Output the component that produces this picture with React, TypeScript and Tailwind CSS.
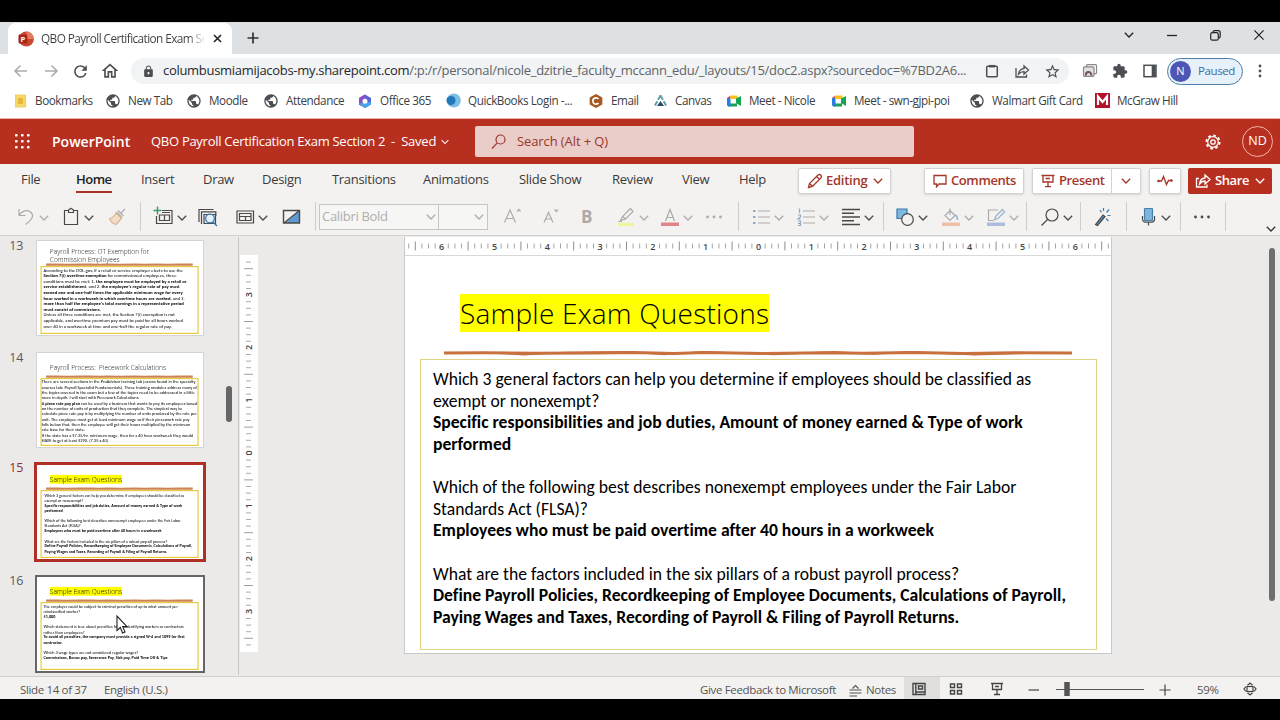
import React from "react";
import { clsx } from "clsx";
import { MdExtension, MdLock, MdOutlineHome, MdPublic, MdRefresh, MdStarBorder } from "react-icons/md";

type IconProps = { children: React.ReactNode; className?: string; size?: number };

function Icon({ children, className, size = 20 }: IconProps) {
  return (
    <svg width={size} height={size} viewBox={`0 0 ${size} ${size}`} fill="none" stroke="currentColor" strokeWidth="1.2" className={clsx("shrink-0", className)}>
      {children}
    </svg>
  );
}

function Chevron({ className }: { className?: string }) {
  return (
    <svg width="10" height="6" viewBox="0 0 10 6" fill="none" stroke="currentColor" strokeWidth="1.3" className={clsx("shrink-0", className)}>
      <path d="M0.8 0.8 5 5 9.2 0.8" />
    </svg>
  );
}

/* ---------- browser chrome ---------- */

function TabStrip() {
  return (
    <div className="flex h-8 bg-[#dee1e4] pl-2 pt-px">
      <div className="flex h-[31px] w-[224px] items-center rounded-t-lg bg-white pl-[10px]">
        <svg width="16" height="16" viewBox="0 0 16 16" className="shrink-0">
          <circle cx="8.3" cy="8" r="7.6" fill="#c9462f" />
          <path d="M8.3 0.4a7.6 7.6 0 0 1 7.6 7.6H8.3z" fill="#e57a60" />
          <rect x="0.5" y="3.6" width="8.8" height="8.8" rx="1" fill="#a52818" />
          <text x="2.6" y="10.8" fontSize="7.6" fontWeight="700" fill="#fff" fontFamily="Open Sans, sans-serif">P</text>
        </svg>
        <span className="ml-[7px] w-[164px] whitespace-nowrap bg-linear-to-r from-[#3c4043] from-90% to-transparent bg-clip-text text-[11.8px] tracking-[-0.58px] text-transparent">
          QBO Payroll Certification Exam Se
        </span>
        <svg width="9" height="9" viewBox="0 0 9 9" className="ml-[8px] shrink-0" stroke="#222" strokeWidth="1.6">
          <path d="M1 1 8 8M8 1 1 8" />
        </svg>
      </div>
      <svg width="12" height="12" viewBox="0 0 12 12" className="ml-[15px] mt-[9px]" stroke="#333" strokeWidth="1.7">
        <path d="M6 0.5V11.5M0.5 6H11.5" />
      </svg>
      <div className="ml-auto flex h-6 items-center text-[#222]">
        <Chevron className="mr-[33px]" />
        <svg width="10" height="10" viewBox="0 0 10 10" className="mr-[33px]" stroke="currentColor" strokeWidth="1.3"><path d="M0 5.5H10" /></svg>
        <svg width="11" height="11" viewBox="0 0 11 11" className="mr-[33px]" fill="none" stroke="currentColor" strokeWidth="1.2">
          <rect x="0.7" y="2.6" width="7.6" height="7.6" rx="1.8" />
          <path d="M3 2.2C3 1 3.6 0.7 4.6 0.7H8.2Q10.2 0.7 10.2 2.7V6.4C10.2 7.6 9.8 8 8.8 8.2" />
        </svg>
        <svg width="10" height="10" viewBox="0 0 10 10" className="mr-4" stroke="currentColor" strokeWidth="1.2"><path d="M0.4 0.4 9.6 9.6M9.6 0.4 0.4 9.6" /></svg>
      </div>
    </div>
  );
}

function AddressBar() {
  return (
    <div className="flex h-[34px] items-center bg-white pl-[13px] text-[#4b4f53]">
      <Icon size={16} className="text-[#a9acaf]"><path strokeWidth="1.6" d="M14 8H2.5M7.5 2.5 2 8l5.5 5.5" /></Icon>
      <Icon size={16} className="ml-[14px] text-[#a9acaf]"><path strokeWidth="1.6" d="M2 8h11.5M8.5 2.5 14 8l-5.5 5.5" /></Icon>
      <MdRefresh size={19} className="ml-[12px]" />
      <MdOutlineHome size={20} className="ml-[10px]" />
      <div className="ml-[11px] flex h-[26px] w-[938px] items-center rounded-full bg-[#f1f3f4] pl-[11px]">
        <MdLock size={13} />
        <span className="ml-2 w-[805px] whitespace-nowrap text-[13px] tracking-[-0.3px] text-[#5f6368]">
          <span className="text-[#26282b]">columbusmiamijacobs-my.sharepoint.com</span>
          /:p:/r/personal/nicole_dzitrie_faculty_mccann_edu/_layouts/15/doc2.aspx?sourcedoc=%7BD2A6...
        </span>
        <Icon size={14} className="ml-[17px]"><rect x="1.7" y="2.2" width="10.6" height="10.6" rx="1" strokeWidth="1.5" /><path strokeWidth="2.5" d="M4 2.2h6" /></Icon>
        <Icon size={16} className="ml-[15px]"><path strokeWidth="1.3" d="M2 5V14H12.5V11.5M4.5 11C5 7.5 7 5.8 10 5.6V3L14.5 7 10 11V8.6C7.5 8.6 6 9.2 4.5 11Z" /></Icon>
        <MdStarBorder size={17} className="ml-[14px]" />
      </div>
      <Icon size={16} className="ml-[13px] text-[#888]">
        <rect x="4.5" y="1.7" width="10" height="9" rx="1" />
        <rect x="1.5" y="3.8" width="10.5" height="9.5" rx="1" fill="#e4e0df" />
        <path d="M3.8 12.5c0-4.6 5.6-4.6 5.6 0" stroke="#6d5552" strokeWidth="2" />
      </Icon>
      <MdExtension size={16} className="ml-[14px]" />
      <Icon size={14} className="ml-[15px]"><rect x="1" y="1.3" width="12" height="11.4" strokeWidth="1.5" /><path d="M10.7 1v12" strokeWidth="4" /></Icon>
      <div className="ml-[10px] flex h-[27px] w-[76px] items-center rounded-full border border-[#4c7fa8] bg-[#e6f1fb] pl-[2px]">
        <span className="flex size-[21px] items-center justify-center rounded-full bg-[#4d55b5] text-[11px] text-white">N</span>
        <span className="ml-[7px] text-[11.5px] tracking-[-0.4px] text-[#3f6b9e]">Paused</span>
      </div>
      <svg width="4" height="14" viewBox="0 0 4 14" className="ml-[15px]" fill="#4b4f53">
        <circle cx="2" cy="2" r="1.4" /><circle cx="2" cy="7" r="1.4" /><circle cx="2" cy="12" r="1.4" />
      </svg>
    </div>
  );
}

const meetIcon = (
  <Icon size={14} className="my-px">
    <path stroke="none" fill="#2a7de1" d="M0 4h3.5v6H0z" />
    <path stroke="none" fill="#e8452f" d="M0 4 3.5 1.5V4z" />
    <path stroke="none" fill="#f8c21c" d="M3.5 1.5H10.5V5H3.5z" />
    <path stroke="none" fill="#15a552" d="M3.5 9.5H10V12.5H1.5L0 11zM9 4.5 14 2v10L9 9z" />
    <path stroke="none" fill="#2a7de1" d="M0 9.5h3.5v3H1.5L0 11z" />
  </Icon>
);

const globe = <MdPublic size={16} className="-ml-px shrink-0 text-[#4b4f53]" />;

const bookmarks = [
  { label: "Bookmarks", cell: "w-[91px]", icon: <Icon size={14}><path d="M0.5 1h10v12h-10z" fill="#f5d867" stroke="#efd064" /><path d="M3 4h5v6H3z" fill="#e4b83c" stroke="none" /></Icon> },
  { label: "New Tab", cell: "w-[81px]", icon: globe },
  { label: "Moodle", cell: "w-[77px]", icon: globe },
  { label: "Attendance", cell: "w-[94px]", icon: globe },
  { label: "Office 365", cell: "w-[88px]", icon: <Icon size={14}><path d="M7 0.5 13 4V10.5L7 14 1 10.5V4Z" fill="#5566d6" stroke="none" /><path d="M7 0.5 1 4V10.5L4 12 7 5Z" fill="#8b50c8" stroke="none" /><path d="M1 9.5 7 14 13 10.5V8Z" fill="#45a5e8" stroke="none" /><circle cx="7" cy="7.2" r="2.5" fill="#fff" stroke="none" /></Icon> },
  { label: "QuickBooks Login -...", cell: "w-[143px]", icon: <Icon size={15}><circle cx="7.8" cy="7.5" r="7" fill="#7cbde6" stroke="none" /><circle cx="5" cy="7.5" r="4.5" fill="#2378b8" stroke="none" /></Icon> },
  { label: "Email", cell: "w-[64px]", icon: <Icon size={14}><path d="M7 0 13.3 3.5V10.5L7 14 0.7 10.5V3.5Z" fill="#a8591f" stroke="none" /><path d="M9.5 5A3.2 3.2 0 1 0 9.5 9" stroke="#fff" strokeWidth="1.7" /></Icon> },
  { label: "Canvas", cell: "w-[74px]", icon: <Icon size={15}><path d="M7.5 2.5 13.6 13.5M7.5 2.5 1.4 13.5" stroke="#5da0a6" strokeWidth="2" strokeDasharray="5 1.5" /><path d="M4 13 7.5 8 11 13Z" fill="#2d4a63" stroke="none" /></Icon> },
  { label: "Meet - Nicole", cell: "w-[105px]", icon: meetIcon },
  { label: "Meet - swn-gjpi-poi", cell: "w-[138px]", icon: meetIcon },
  { label: "Walmart Gift Card", cell: "w-[125px]", icon: globe },
  { label: "McGraw Hill", cell: "w-[90px]", icon: <Icon size={15}><rect width="15" height="15" fill="#b3122a" stroke="none" /><path d="M3 12V3.5L7.5 9 12 3.5V12" stroke="#fff" strokeWidth="2.2" /></Icon> },
];

function BookmarksBar() {
  return (
    <div className="flex h-[30px] items-center bg-white pb-1 pl-[15px] text-[11.7px] text-[#3c4043]">
      {bookmarks.map((b, i) => (
        <div key={b.label} className={clsx("flex shrink-0 items-center", b.cell)}>
          <span className={clsx("flex shrink-0", i === 0 ? "w-5" : "w-[22px]")}>{b.icon}</span>
          <span className="whitespace-nowrap tracking-[-0.42px]">{b.label}</span>
        </div>
      ))}
    </div>
  );
}

/* ---------- PowerPoint header and ribbon ---------- */

function AppHeader() {
  return (
    <div className="flex h-[45px] items-center bg-[#b7301f] pl-[15px] text-white">
      <svg width="15" height="15" viewBox="0 0 15 15" fill="#fff">
        {[0, 6, 12].map((y) => [0, 6, 12].map((x) => <rect key={`${x}-${y}`} x={x} y={y} width="2.6" height="2.6" rx="0.8" />))}
      </svg>
      <span className="ml-[22px] w-[99px] text-[14px] font-semibold">PowerPoint</span>
      <span className="w-[240px] whitespace-nowrap text-[13px] tracking-[-0.28px]">QBO Payroll Certification Exam Section 2</span>
      <span className="w-[50px] whitespace-nowrap text-[13px] tracking-[-0.24px]">-&nbsp; Saved</span>
      <Chevron className="w-2" />
      <div className="ml-[26px] flex h-[31px] w-[439px] items-center rounded-[2px] bg-[#eaccc8] pl-4 text-[#98382c]">
        <Icon size={16}><circle cx="9.5" cy="5.5" r="4.5" /><path d="M6.3 8.9 1 14.5" /></Icon>
        <span className="ml-[10px] text-[13px] tracking-[-0.1px]">Search (Alt + Q)</span>
      </div>
      <Icon size={16} className="ml-[291px]">
        <circle cx="8" cy="8" r="6.6" strokeWidth="1.9" strokeDasharray="2.7 2.48" />
        <circle cx="8" cy="8" r="5.3" strokeWidth="1.2" />
        <circle cx="8" cy="8" r="2.2" strokeWidth="1.3" />
      </Icon>
      <span className="ml-[21px] flex size-[31px] items-center justify-center rounded-full border-[1.5px] border-[#f6b3a8] text-[12.5px]">ND</span>
    </div>
  );
}

const tabs = [
  { label: "File", cell: "w-[55px]" },
  { label: "Home", cell: "w-[65px]", active: true },
  { label: "Insert", cell: "w-[62px]" },
  { label: "Draw", cell: "w-[59px]" },
  { label: "Design", cell: "w-[70px]" },
  { label: "Transitions", cell: "w-[91px]" },
  { label: "Animations", cell: "w-[96px]" },
  { label: "Slide Show", cell: "w-[93px]" },
  { label: "Review", cell: "w-[70px]" },
  { label: "View", cell: "w-[57px]" },
  { label: "Help", cell: "w-[59px]" },
];

const buttonBase = "flex h-[26px] items-center rounded-[2px] border border-[#d4d2d0] bg-white text-[#a4372a] shadow-sm";

function RibbonTabs() {
  return (
    <div className="flex h-[36px] pl-[21px] text-[13px] text-[#3b3a39]">
      {tabs.map((t) => (
        <div key={t.label} className={clsx("flex shrink-0 pt-[6px]", t.cell)}>
          <span className={clsx("h-[23px] whitespace-nowrap", t.active ? "border-b-2 border-[#a83224] font-semibold tracking-[-0.5px] text-[#222]" : "tracking-[-0.3px]")}>{t.label}</span>
        </div>
      ))}
      <div className="flex pt-1 font-semibold tracking-[-0.25px]">
        <div className={clsx(buttonBase, "w-[93px] pl-2")}>
          <Icon size={16}><path strokeWidth="1.3" d="M1.5 14.5 2.5 10.5 11 2Q12.5 0.8 13.8 2.2 15 3.5 13.8 5L5.5 13.5ZM9.5 3.5 12.3 6.3M2.5 10.5 5.5 13.5" /></Icon>
          <span className="ml-[3px] w-[46px]">Editing</span>
          <Chevron className="ml-px" />
        </div>
        <div className={clsx(buttonBase, "ml-[33px] w-[100px] pl-2")}>
          <Icon size={14}><path strokeWidth="1.3" d="M1 1.5H13V10H6L3.5 12.8V10H1Z" /></Icon>
          <span className="ml-[4px] tracking-[-0.4px]">Comments</span>
        </div>
        <div className={clsx(buttonBase, "ml-2 w-[109px] pl-2")}>
          <Icon size={14}><path strokeWidth="1.3" d="M0.5 1.5H13.5M2 1.5V8H12V1.5M7 8V12.5M4 12.7H10M4.5 4.5H9" /></Icon>
          <span className="ml-[4px] w-[52px] tracking-[-0.4px]">Present</span>
          <span className="flex h-full w-[29px] items-center justify-center border-l border-[#d4d2d0]"><Chevron /></span>
        </div>
        <div className={clsx(buttonBase, "ml-2 w-[32px] justify-center")}>
          <Icon size={16}><path strokeWidth="1.4" d="M1.5 8H4.5L6.5 3.5 9.5 11.5 11.5 7.5H14.5" /><circle cx="1.5" cy="8" r="0.7" fill="currentColor" /><circle cx="14.5" cy="7.5" r="0.7" fill="currentColor" /></Icon>
        </div>
        <div className="ml-[7px] flex h-[26px] w-[84px] items-center rounded-[2px] bg-[#b7301f] pl-[7px] text-white">
          <Icon size={16}><path strokeWidth="1.3" d="M4 5.5H1.5V14H12V11.5M4.5 11C5 7 7 5.2 10 5V2L15 6.5 10 11V8C7.5 8 6 9 4.5 11Z" /></Icon>
          <span className="ml-[4px] w-[36px] tracking-[-0.4px]">Share</span>
          <Chevron className="ml-1" />
        </div>
      </div>
    </div>
  );
}

function Tool({ cell, dim, chevron, children }: { cell: string; dim?: boolean; chevron?: boolean; children: React.ReactNode }) {
  return (
    <div className={clsx("flex shrink-0 items-center", cell, dim ? "text-[#adabaa]" : "text-[#4a4948]")}>
      {children}
      {chevron && <Chevron className="ml-[3px] mt-[2px]" />}
    </div>
  );
}

function Rule({ gap }: { gap: string }) {
  return <div className={clsx("h-[29px] w-px shrink-0 bg-[#cfcdcb]", gap)} />;
}

function Toolbar() {
  return (
    <div className="flex h-[36px] items-center border-b border-[#d2d0ce] pb-[2px] pl-4">
      <Tool cell="w-[45px]" chevron dim>
        <Icon><path d="M3 2V8.5H9.500M3.300 8.200C6 3.5 11 2.5 14.5 5c3.5 3 3 6.5-5 12.500" /></Icon>
      </Tool>
      <Tool cell="w-[46px]" chevron>
        <Icon><path d="M7.500 3.5H3.500V17.500H16.5V3.5H12.500M7.500 5.500V3L9 2Q10 0.500 11 2L12.500 3V5.500Z" /></Icon>
      </Tool>
      <Tool cell="w-[33px]" dim>
        <Icon><path d="M18 2 13.500 6.500M9.500 5 15 10.500M11 3.500 16.500 9" /><path d="M9 6 14.500 11.500 9 17.500Q4.500 16.500 2.500 11.500Q6.500 11 9 6Z" fill="#f3ddc6" stroke="#d8b794" /></Icon>
      </Tool>
      <Rule gap="mr-[12px]" />
      <Tool cell="w-[45px]" chevron>
        <Icon size={22} className="-mr-px"><path d="M9 4.5H19V17.500H3.500V10" /><path d="M6.500 9H16.500V14.500H6.500ZM11.500 9V14.500M9 6.500H17" /><path d="M4.500 0.500V8.500M0.500 4.500H8.500" stroke="#3c9a62" strokeWidth="1.4" /></Icon>
      </Tool>
      <Tool cell="w-[37px]">
        <Icon><path d="M1 15V2.500H15.500M3.500 17V4.800H17.800V9" /><path d="M6 7.500H17.500V16.500H6Z" fill="#d5e6f4" /><circle cx="12" cy="11.5" r="4.3" stroke="#3a78ad" fill="#e6f2fb" /><path d="M15 15 19 19" stroke="#3a78ad" strokeWidth="1.5" /></Icon>
      </Tool>
      <Tool cell="w-[47px]" chevron>
        <Icon><path d="M2 4H18.500V16H2ZM4.500 6.500H16V13.500H4.500ZM4.500 9.500H16M10.500 9.500V13.500" /></Icon>
      </Tool>
      <Tool cell="w-[33px]">
        <Icon><path d="M17.500 3.500V16H3.500Z" fill="#5f9bd2" stroke="none" /><path d="M1.500 3.500H17.500V16H1.500ZM2 16 17.500 3.500" strokeWidth="1.4" /></Icon>
      </Tool>
      <Rule gap="mr-[3px]" />
      <div className="flex h-[26px] w-[120px] items-center border border-[#c8c6c4] bg-[#f6f6f5] pl-[2px] pr-[2px] text-[13px] tracking-[-0.3px] text-[#b0aeac]">
        Calibri Bold
        <Chevron className="ml-auto" />
      </div>
      <div className="mr-[15px] flex h-[26px] w-[49px] items-center justify-end border border-l-0 border-[#c8c6c4] bg-[#f6f6f5] pr-[3px] text-[#b0aeac]"><Chevron /></div>
      <Tool cell="w-[38px]" dim><Icon><path d="M1.500 15.500 7 3 12.500 15.500M3.500 11.500H10.500M14 4.500 15.800 2.500 17.600 4.500" /></Icon></Tool>
      <Tool cell="w-[36px]" dim><Icon><path d="M3 15.500 7.500 5.500 12 15.500M4.800 12H10.200M13.500 2.500 15.300 4.500 17 2.500" /></Icon></Tool>
      <Tool cell="w-[39px]" dim><span className="ml-1 text-[17px] font-bold">B</span></Tool>
      <Tool cell="w-[44px]" chevron dim>
        <Icon><path d="M2 16H18V19H2Z" fill="#f3f49a" stroke="none" /><path d="M4.500 13.500 6.500 9.500 14.500 1.500 17 4.500 9.500 12ZM6.500 9.500 9.500 12M2.500 14.500H6" /></Icon>
      </Tool>
      <Tool cell="w-[44px]" chevron dim>
        <Icon><path d="M1 15.500H19V19H1Z" fill="#e0848b" stroke="none" /><path d="M5.500 14 10 2.500 14.500 14M7 10.500H13" /></Icon>
      </Tool>
      <Tool cell="w-[34px]" dim><Icon><g fill="currentColor" stroke="none"><circle cx="3.5" cy="10" r="1.4" /><circle cx="10" cy="10" r="1.4" /><circle cx="16.5" cy="10" r="1.4" /></g></Icon></Tool>
      <Rule gap="mr-[12px]" />
      <Tool cell="w-[45px]" chevron dim>
        <Icon><path d="M7 4H19M7 10H19M7 16H19" /><path d="M2 4H4.500M2 10H4.500M2 16H4.500" stroke="#90acc5" strokeWidth="2.2" /></Icon>
      </Tool>
      <Tool cell="w-[45px]" chevron dim>
        <Icon><path d="M7 4H19M7 10H19M7 16H19" /><path d="M3.500 1.500V6M2 8H4.500V10L2 12H4.500M2 14H4.500V18.500H2M2 16.300H4.500" stroke="#90acc5" /></Icon>
      </Tool>
      <Tool cell="w-[42px]" chevron>
        <Icon><path d="M1 2.500H19M1 6.200H13M1 10H19M1 13.800H13M1 17.500H19" strokeWidth="1.4" /></Icon>
      </Tool>
      <Rule gap="mr-[11px]" />
      <Tool cell="w-[46px]" chevron>
        <Icon><path d="M2 2H12V11.500H2Z" fill="#7db8de" stroke="#3a78a8" /><circle cx="12.5" cy="12.500" r="5.8" fill="#f3f2f1" /></Icon>
      </Tool>
      <Tool cell="w-[45px]" chevron dim>
        <Icon><path d="M1 15.500H19V19H1Z" fill="#eebfa9" stroke="none" /><path d="M9 1.500V8M9 3.500 14 8.500 9 13.500 4 8.500Z" /><path d="M13.500 8.500Q16 7.500 16.500 13" stroke="#93b1cc" strokeWidth="1.6" /></Icon>
      </Tool>
      <Tool cell="w-[40px]" chevron dim>
        <Icon><path d="M1 15.500H19V19H1Z" fill="#acbcdc" stroke="none" /><path d="M12 3H2.500V13.500H8" /><path d="M8.500 12.500 10 9 16.500 2.500 18.500 5 12 11.500Z" stroke="#93b1cc" /></Icon>
      </Tool>
      <Rule gap="mr-[13px]" />
      <Tool cell="w-[40px]" chevron>
        <Icon><circle cx="12" cy="8" r="6" /><path d="M7.800 12.300 1.500 18.500" /></Icon>
      </Tool>
      <Rule gap="mr-[12px]" />
      <Tool cell="w-[33px]">
        <Icon><path d="M2.500 17.500 10 8 12 9.500 4.500 18.500Z" fill="#5790bd" /><path d="M10.500 1V4M13.500 5.500 16 2.500M14.500 8.500H17.500M13 11.500 15.500 14M7 3 8.500 5.500" stroke="#3c80ae" /></Icon>
      </Tool>
      <Rule gap="mr-[11px]" />
      <Tool cell="w-[42px]" chevron>
        <Icon><rect x="6.5" y="1.5" width="8" height="12" rx="0.8" fill="#7fb4df" stroke="#4581ad" /><path d="M4.500 9V12.500Q5 15 7.500 15.200H13.500Q16.500 15 16.500 12.500V9M10.500 15.500V18.500" /></Icon>
      </Tool>
      <Rule gap="mr-[11px]" />
      <Tool cell="w-[33px]"><Icon><g fill="currentColor" stroke="none"><circle cx="3.5" cy="10" r="1.4" /><circle cx="10" cy="10" r="1.4" /><circle cx="16.5" cy="10" r="1.4" /></g></Icon></Tool>
      <Rule gap="mr-[40px]" />
      <Chevron className="mt-6 text-[#333]" />
    </div>
  );
}

/* ---------- slides ---------- */

type Line = React.ReactNode;

type SlideData = {
  title: Line[];
  highlight?: boolean;
  body: Line[];
  text: string;
};

const examQuestions: SlideData = {
  title: ["Sample Exam Questions"],
  highlight: true,
  text: "pl-3 pt-[9px] text-[17.6px] leading-[21.64px]",
  body: [
    "Which 3 general factors can help you determine if employees should be classified as",
    "exempt or nonexempt?",
    <b>Specific responsibilities and job duties, Amount of money earned &amp; Type of work</b>,
    <b>performed</b>,
    "",
    "Which of the following best describes nonexempt employees under the Fair Labor",
    "Standards Act (FLSA)?",
    <b>Employees who must be paid overtime after 40 hours in a workweek</b>,
    "",
    "What are the factors included in the six pillars of a robust payroll process?",
    <b>Define Payroll Policies, Recordkeeping of Employee Documents, Calculations of Payroll,</b>,
    <b>Paying Wages and Taxes, Recording of Payroll &amp; Filing of Payroll Returns.</b>,
  ],
};

const overtime: SlideData = {
  title: ["Payroll Process: OT Exemption for", "Commission Employees"],
  text: "pl-2 text-[20.3px] leading-[24px]",
  body: [
    "According to the DOL.gov, if a retail or service employer elects to use the",
    <><b>Section 7(i) overtime exemption</b> for commissioned employees, three</>,
    <>conditions must be met: 1. <b>the employee must be employed by a retail or</b></>,
    <><b>service establishment</b>, and 2. <b>the employee's regular rate of pay must</b></>,
    <b>exceed one and one-half times the applicable minimum wage for every</b>,
    <><b>hour worked in a workweek in which overtime hours are worked</b>, and 3.</>,
    <b>more than half the employee's total earnings in a representative period</b>,
    <b>must consist of commissions.</b>,
    "Unless all three conditions are met, the Section 7(i) exemption is not",
    "applicable, and overtime premium pay must be paid for all hours worked",
    "over 40 in a workweek at time and one-half the regular rate of pay.",
  ],
};

const piecework: SlideData = {
  title: ["Payroll Process:  Piecework Calculations"],
  text: "pl-0 text-[19px] leading-[22.9px]",
  body: [
    "There are several sections in the ProAdvisor training tab (exams found in the specialty",
    "courses tab: Payroll Specialist Fundamentals). These training modules address many of",
    "the topics covered in the exam but a few of the topics need to be addressed in a little",
    "more in depth. I will start with Piecework Calculations.",
    <>A <b>piece rate pay plan</b> can be used by a business that wants to pay its employees based</>,
    "on the number of units of production that they complete. The simplest way to",
    "calculate piece rate pay is by multiplying the number of units produced by the rate per",
    "unit. The employee must get at least minimum wage so if their piecework rate pay",
    "falls below that, then the employee will get their hours multiplied by the minimum",
    "rate base for their state.",
    "If the state has a $7.25/hr. minimum wage, then for a 40 hour workweek they would",
    "HAVE to get at least $290. (7.25 x 40)",
  ],
};

const penalties: SlideData = {
  title: ["Sample Exam Questions"],
  highlight: true,
  text: "pl-2 pt-1 text-[18.2px] leading-[21.9px]",
  body: [
    "The employer could be subject to criminal penalties of up to what amount per",
    "misclassified worker?",
    <b>$1,000</b>,
    "",
    "Which statement is true about penalties for misidentifying workers as contractors",
    "rather than employees?",
    <b>To avoid all penalties, the company must provide a signed W-4 and 1099 for that</b>,
    <b>contractor.</b>,
    "",
    "Which 3 wage types are not considered regular wages?",
    <b>Commissions, Bonus pay, Severance Pay, Sick pay, Paid Time Off &amp; Tips</b>,
  ],
};

function Slide({ data, mini }: { data: SlideData; mini?: boolean }) {
  return (
    <div className="flex h-[397px] w-[706px] flex-col bg-white font-[Calibri,Carlito,Lato,sans-serif] text-black [font-variant-ligatures:none]">
      <div className="flex h-[92px] flex-col justify-center pl-[55px] pt-[21px] font-['Open_Sans',Lato,sans-serif] font-light">
        {data.title.map((line, i) => (
          <div key={i} className={clsx("flex", data.highlight ? "text-[28px] leading-[38px] tracking-[0.21px]" : "text-[28px] leading-[35px] text-[#111]")}>
            <span className={clsx("whitespace-pre", data.highlight && "bg-[#ffff00]")}>{line}</span>
          </div>
        ))}
      </div>
      <svg width="628" height="8" viewBox="0 0 628 8" fill="none" className="ml-[39px] mt-px shrink-0 overflow-visible" stroke={mini ? "#cd8450" : "#c9703f"} strokeWidth={mini ? 9 : 3}>
        <path d="M0 4 40 3.7 90 4.3 150 4 190 3.4 230 4.6 260 3.6 320 4.4 380 3.8 420 4.3 470 3.6 520 4.5 570 3.7 628 4" />
        {!mini && <path strokeWidth="1.4" d="M50 4 80 5.7 120 3.4 180 2.6 220 5.5 260 2.6 330 5.6 390 2.7 430 5 465 2.6 530 5.7 590 4" />}
      </svg>
      <div className={clsx("ml-[15px] mt-[2px] flex h-[291px] w-[677px] flex-col", data.text, mini ? "border-[5px] border-[#e9c93c]" : "border border-[#ddd382]")}>
        {data.body.map((line, i) => (
          <p key={i} className="min-h-[1lh] whitespace-nowrap">{line}</p>
        ))}
      </div>
    </div>
  );
}

function Thumb({ no, data, frame, row }: { no: number; data: SlideData; frame: string; row: string }) {
  return (
    <div className={clsx("flex shrink-0", row)}>
      <span className={clsx("-mt-[3px] w-[23px] text-right text-[12.5px] tracking-[-0.3px]", no === 15 ? "text-[#8f2c3c]" : "text-[#5a5965]")}>{no}</span>
      <div className={clsx("overflow-hidden bg-white", frame)}>
        <div className="mt-px h-[93px] w-[165px]">
          <div className="origin-top-left scale-[0.2335]">
            <Slide data={data} mini />
          </div>
        </div>
      </div>
    </div>
  );
}

function ThumbnailPane() {
  return (
    <div className="flex h-[438px] w-[238px] shrink-0 justify-between">
      <div className="flex flex-col">
        <Thumb no={13} data={overtime} row="h-[112px] pt-[3px]" frame="ml-[13px] h-[96px] w-[168px] border border-[#d5d3d1]" />
        <Thumb no={14} data={piecework} row="h-[110px] pt-[3px]" frame="ml-[13px] h-[96px] w-[168px] border border-[#d5d3d1]" />
        <Thumb no={15} data={examQuestions} row="h-[113px] pt-[3px]" frame="ml-[11px] h-[100px] w-[172px] border-[3px] border-[#b03028]" />
        <Thumb no={16} data={penalties} row="h-[101px] pt-[3px]" frame="ml-[12px] h-[98px] w-[170px] border-2 border-[#666]" />
      </div>
      <div className="mr-1.5 mt-[149px] h-9 w-1.5 rounded-full bg-[#666]" />
    </div>
  );
}

const UNIT = 52.8;

function HorizontalRuler() {
  const ticks = Array.from({ length: 107 }, (_, i) => i - 53);
  return (
    <svg width="706" height="19" viewBox="0 0 706 19" className="shrink-0 bg-white">
      {ticks.map((t) => {
        if (t % 8 === 0) {
          return (
            <text key={t} x={353.5 + (t * UNIT) / 8} y="12.5" fontSize="9" fontWeight="600" textAnchor="middle" fill="#444">{Math.abs(t / 8)}</text>
          );
        }
        const tall = t % 4 === 0;
        return <rect key={t} x={353 + (t * UNIT) / 8} y={tall ? 4.5 : 6.5} width="1" height={tall ? 9 : 5} fill={tall ? "#8f8f8f" : "#a5a5a5"} />;
      })}
      <rect y="18" width="706" height="1" fill="#d8d8d8" />
    </svg>
  );
}

function VerticalRuler() {
  const ticks = Array.from({ length: 59 }, (_, i) => i - 29);
  return (
    <svg width="18" height="397" viewBox="0 0 18 397" className="mt-[18px] shrink-0 bg-white">
      {ticks.map((t) => {
        const y = 198 + (t * UNIT) / 8;
        if (t % 8 === 0) {
          return (
            <text key={t} transform={`translate(12 ${y}) rotate(-90)`} fontSize="9" fontWeight="600" textAnchor="middle" fill="#444">{Math.abs(t / 8)}</text>
          );
        }
        const tall = t % 4 === 0;
        return <rect key={t} x={tall ? 4 : 6} y={y} width={tall ? 9 : 5} height="1" fill={tall ? "#a0a0a0" : "#adadad"} />;
      })}
    </svg>
  );
}

function Editor() {
  return (
    <div className="flex h-[438px] flex-1 border-l border-[#c9c7c5]">
      <div className="w-px" />
      <VerticalRuler />
      <div className="ml-[146px] flex h-[417px] w-[708px] flex-col border-x border-b border-[#c9c9c9]">
        <HorizontalRuler />
        <Slide data={examQuestions} />
      </div>
      <div className="ml-auto mr-[5px] mt-[11px] h-[353px] w-1.5 rounded-full bg-[#6e6e6e]" />
    </div>
  );
}

function StatusBar() {
  return (
    <div className="flex h-[23px] items-center border-t border-[#d2d0ce] bg-[#f3f2f1] pl-5 pt-1 text-[11.5px] tracking-[-0.35px] text-[#555]">
      <span className="w-[84px]">Slide 14 of 37</span>
      <span className="w-[596px]">English (U.S.)</span>
      <span className="w-[149px] whitespace-nowrap">Give Feedback to Microsoft</span>
      <Icon size={13}><path d="M0.5 6H12.5M0.5 9H12.5M0.5 12H8M3.5 4.5 6.5 1.5 9.5 4.5" /></Icon>
      <span className="ml-1 w-[38px]">Notes</span>
      <span className="-mt-1 flex h-[22px] w-9 items-center justify-center bg-[#e1dfdd] pt-[2px] text-[#444]">
        <Icon size={14} className="-ml-[7px]"><path strokeWidth="1.4" d="M1 1.5H13V12.5H1ZM3.8 1.5V12.5M4 10H13M6.5 4H10.5V7H6.5Z" /></Icon>
      </span>
      <Icon size={14} className="-mt-[3px] ml-[9px] text-[#444]"><path strokeWidth="1.4" d="M1.5 2H5.5V5.5H1.5ZM8.5 2H12.5V5.5H8.5ZM1.5 8.5H5.5V12H1.5ZM8.5 8.5H12.5V12H8.5Z" /></Icon>
      <Icon size={14} className="-mt-[2px] ml-[27px] text-[#444]"><path strokeWidth="1.3" d="M1 1.5H13M2.5 1.5V7.5H11.5V1.5M7 7.5V12M4 12.5H10M5 4.5H9" /></Icon>
      <Icon size={12} className="ml-[24px] text-[#444]"><path d="M0.5 6H11" /></Icon>
      <svg width="88" height="14" viewBox="0 0 88 14" className="-mt-[2px] ml-4 shrink-0" stroke="#555"><path d="M0 7.5H88" /><path d="M11 0V14" strokeWidth="5.5" /></svg>
      <Icon size={12} className="ml-[15px] text-[#444]"><path d="M0.5 6H11.5M6 0.5V11.5" /></Icon>
      <span className="ml-[26px] w-[46px]">59%</span>
      <Icon size={14} className="-mt-[2px] text-[#444]"><rect x="4" y="4.5" width="6" height="5" /><path d="M4.5 3.3 7 1 9.5 3.3M4.5 10.7 7 13 9.5 10.7M3 4.5 1 7 3 9.5M11 4.5 13 7 11 9.5" /></Icon>
    </div>
  );
}

export default function App() {
  return (
    <div className="relative flex h-[720px] w-[1280px] flex-col overflow-hidden bg-black pt-[22px] font-['Open_Sans',sans-serif]">
      <TabStrip />
      <AddressBar />
      <BookmarksBar />
      <div className="h-px bg-[#e9b3ac]" />
      <AppHeader />
      <div className="h-[72px] bg-[#f3f2f1]">
        <RibbonTabs />
        <Toolbar />
      </div>
      <div className="flex h-[440px] bg-[#ebeae8] pt-px">
        <ThumbnailPane />
        <Editor />
      </div>
      <StatusBar />
      {/* mouse pointer */}
      <svg width="14" height="20" viewBox="0 0 14 20" className="absolute left-[116px] top-[615px]">
        <path d="M1 1V15.5L4.3 12.5 6.6 18 9 17 6.7 11.6H11Z" fill="#fff" stroke="#222" strokeWidth="1.1" />
      </svg>
    </div>
  );
}
